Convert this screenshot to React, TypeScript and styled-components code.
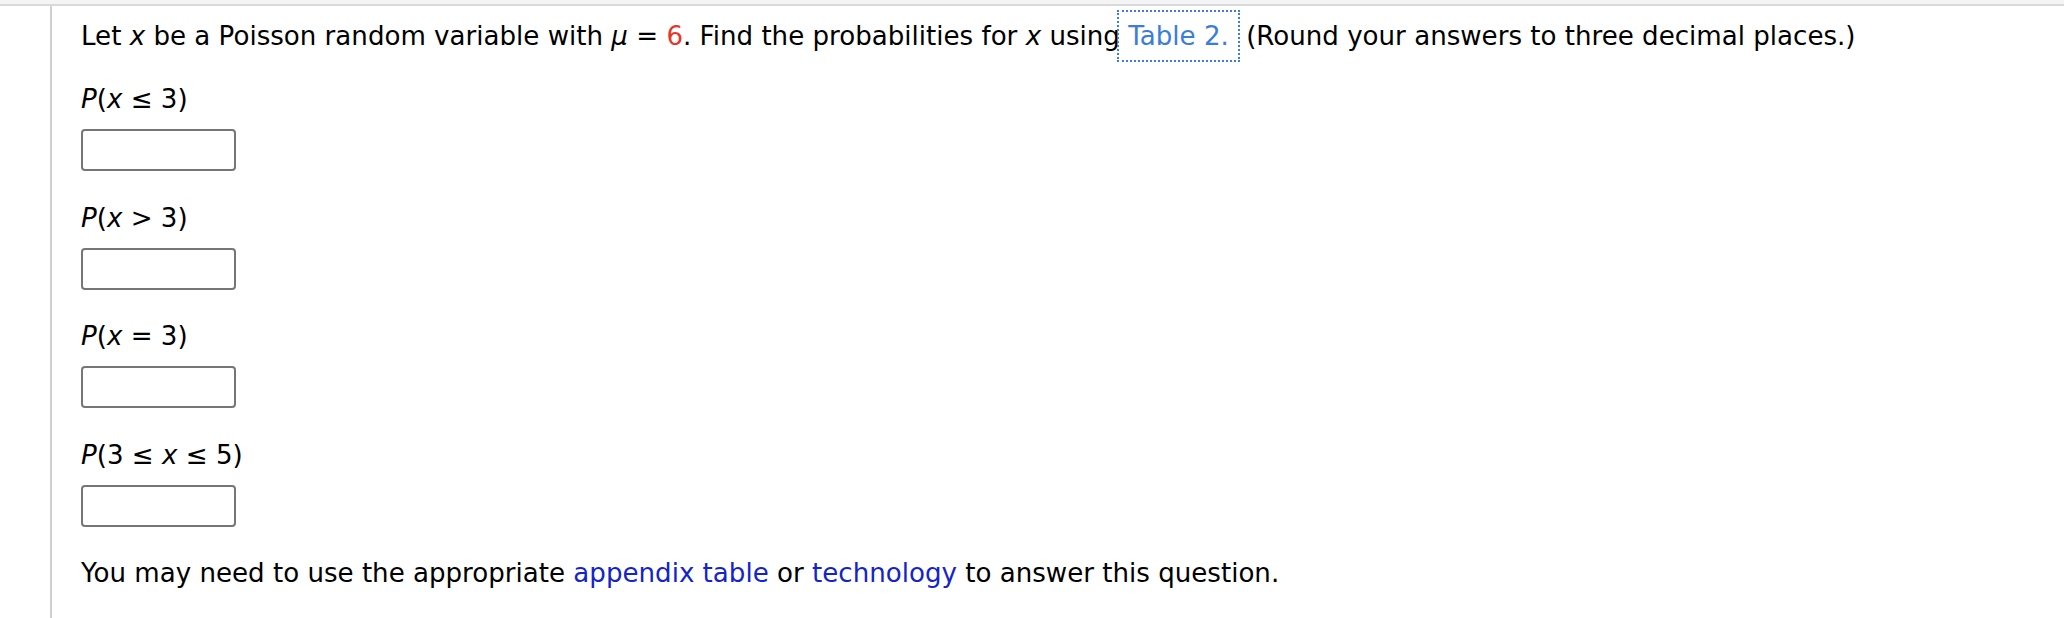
import { FC } from 'react'
import styled, { createGlobalStyle } from 'styled-components'

const GlobalStyle = createGlobalStyle`
  html, body {
    margin: 0;
    padding: 0;
    background: #fff;
  }
  body {
    font-family: 'DejaVu Sans', Verdana, sans-serif;
    color: #000;
  }
`

const Page = styled.div`
  min-height: 618px;
  display: flex;
  flex-direction: column;
`

const TopBar = styled.div`
  height: 4px;
  background: #f4f4f4;
  border-bottom: 2px solid #dadada;
`

const Body = styled.div`
  flex: 1;
  display: flex;
`

const Gutter = styled.div`
  width: 50px;
  flex-shrink: 0;
`

const Content = styled.div`
  flex: 1;
  border-left: 2px solid #cfcfcf;
  padding: 12.5px 0 0 29px;
  font-size: 26.1px;
  line-height: 34px;
`

const Paragraph = styled.p`
  margin: 0;
  white-space: nowrap;
`

const Var = styled.i`
  font-style: italic;
`

const Given = styled.span`
  color: #e5382b;
`

const TableLink = styled.span`
  color: #3b7dd8;
  outline: 2px dotted #3b7dd8;
  outline-offset: 9.5px;
  margin-right: 9px;
`

const Link = styled.span`
  color: #1424c8;
`

const Part = styled.div`
  margin-top: 29.5px;
  display: flex;
  flex-direction: column;
  align-items: flex-start;
  gap: 13px;
`

const Label = styled.div`
  white-space: nowrap;
`

const AnswerBox = styled.input`
  box-sizing: border-box;
  width: 155px;
  height: 42px;
  margin: 0;
  border: 2px solid #767676;
  border-radius: 4px;
  background: #fff;
  font: inherit;
  padding: 0 6px;
`

const Footer = styled(Paragraph)`
  margin-top: 29px;
`

const parts = [
  <>
    <Var>P</Var>(<Var>x</Var> ≤ 3)
  </>,
  <>
    <Var>P</Var>(<Var>x</Var> &gt; 3)
  </>,
  <>
    <Var>P</Var>(<Var>x</Var> = 3)
  </>,
  <>
    <Var>P</Var>(3 ≤ <Var>x</Var> ≤ 5)
  </>,
]

const App: FC = () => (
  <>
    <GlobalStyle />
    <Page>
      <TopBar />
      <Body>
        <Gutter />
        <Content>
          <Paragraph>
            Let <Var>x</Var> be a Poisson random variable with <Var>μ</Var> ={' '}
            <Given>6</Given>. Find the probabilities for <Var>x</Var> using{' '}
            <TableLink>Table 2.</TableLink> (Round your answers to three decimal
            places.)
          </Paragraph>
          {parts.map((label, i) => (
            <Part key={i}>
              <Label>{label}</Label>
              <AnswerBox type="text" />
            </Part>
          ))}
          <Footer>
            You may need to use the appropriate <Link>appendix table</Link> or{' '}
            <Link>technology</Link> to answer this question.
          </Footer>
        </Content>
      </Body>
    </Page>
  </>
)

export default App
